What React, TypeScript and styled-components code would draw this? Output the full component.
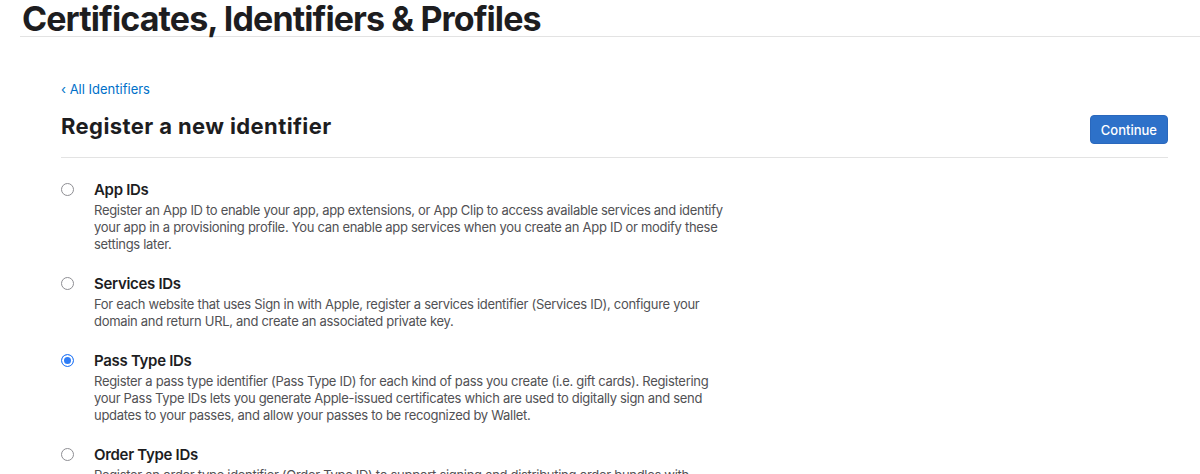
import React, { useState } from 'react'
import styled, { createGlobalStyle } from 'styled-components'

const GlobalStyle = createGlobalStyle`
    html, body {
        margin : 0;
        padding : 0;
        background : #fff;
    }
    body {
        font-family : Inter, "Noto Sans", "Liberation Sans", sans-serif;
        color : #1d1d1f;
        -webkit-font-smoothing : antialiased;
    }
`

const Page = styled.div`
    width : 1200px;
    height : 474px;
    overflow : hidden;
`

const Header = styled.header`
    margin-left : 20px;
    border-bottom : 1px solid #e3e3e3;
`

const PageTitle = styled.h1`
    margin : 0;
    padding : 1px 0 0 2px;
    font-size : 34px;
    line-height : 35px;
    font-weight : 700;
    letter-spacing : -0.9px;
    color : #1d1d1f;
`

const Main = styled.main`
    padding : 44px 32px 0 61px;
`

const BackLink = styled.a`
    display : block;
    font-size : 13px;
    line-height : 16px;
    color : #0070c9;
    text-decoration : none;
    cursor : pointer;
`

const TitleRow = styled.div`
    display : flex;
    justify-content : space-between;
    align-items : flex-start;
    margin-top : 15px;
    padding-bottom : 13px;
    border-bottom : 1px solid #e3e3e3;
`

const SectionTitle = styled.h2`
    margin : 0;
    font-size : 22px;
    line-height : 28px;
    font-weight : 700;
    letter-spacing : 0.4px;
`

const Button = styled.button`
    margin-top : 3px;
    height : 29px;
    padding : 0 10px;
    border : 1px solid #2a68bd;
    border-radius : 4px;
    background : #2d71c9;
    color : #fff;
    font-family : inherit;
    font-size : 13px;
    font-weight : 500;
    cursor : pointer;
`

const OptionList = styled.div`
    display : flex;
    flex-direction : column;
    gap : 21px;
    padding-top : 22px;
`

const Option = styled.label`
    display : flex;
    gap : 20px;
    cursor : pointer;
`

const Radio = styled.span<{ $checked : boolean }>`
    flex : none;
    box-sizing : border-box;
    width : 13px;
    height : 13px;
    margin-top : 3px;
    border-radius : 50%;
    border : ${p => p.$checked ? '1px solid #2f7df6' : '1px solid #8e8e93'};
    background : ${p => p.$checked ? '#2f7df6' : '#fff'};
    box-shadow : ${p => p.$checked ? 'inset 0 0 0 2px #fff' : 'none'};
`

const OptionBody = styled.div`
    width : 630px;
`

const OptionTitle = styled.div`
    font-size : 15px;
    line-height : 20px;
    font-weight : 600;
    letter-spacing : -0.3px;
`

const OptionText = styled.p`
    margin : 2px 0 0;
    font-size : 13px;
    line-height : 17px;
    letter-spacing : -0.3px;
    color : #515154;
`

const options = [
    {
        id : 'app',
        title : 'App IDs',
        text : 'Register an App ID to enable your app, app extensions, or App Clip to access available services and identify your app in a provisioning profile. You can enable app services when you create an App ID or modify these settings later.'
    },
    {
        id : 'services',
        title : 'Services IDs',
        text : 'For each website that uses Sign in with Apple, register a services identifier (Services ID), configure your domain and return URL, and create an associated private key.'
    },
    {
        id : 'pass',
        title : 'Pass Type IDs',
        text : 'Register a pass type identifier (Pass Type ID) for each kind of pass you create (i.e. gift cards). Registering your Pass Type IDs lets you generate Apple-issued certificates which are used to digitally sign and send updates to your passes, and allow your passes to be recognized by Wallet.'
    },
    {
        id : 'order',
        title : 'Order Type IDs',
        text : 'Register an order type identifier (Order Type ID) to support signing and distributing order bundles with Wallet.'
    }
]

function App() {
    const [selected, setSelected] = useState('pass')

    return (
        <Page>
            <GlobalStyle />
            <Header>
                <PageTitle>Certificates, Identifiers &amp; Profiles</PageTitle>
            </Header>
            <Main>
                <BackLink>‹ All Identifiers</BackLink>
                <TitleRow>
                    <SectionTitle>Register a new identifier</SectionTitle>
                    <Button>Continue</Button>
                </TitleRow>
                <OptionList>
                    {options.map(option => (
                        <Option key={option.id} onClick={() => setSelected(option.id)}>
                            <Radio $checked={selected === option.id} />
                            <OptionBody>
                                <OptionTitle>{option.title}</OptionTitle>
                                <OptionText>{option.text}</OptionText>
                            </OptionBody>
                        </Option>
                    ))}
                </OptionList>
            </Main>
        </Page>
    )
}

export default App
